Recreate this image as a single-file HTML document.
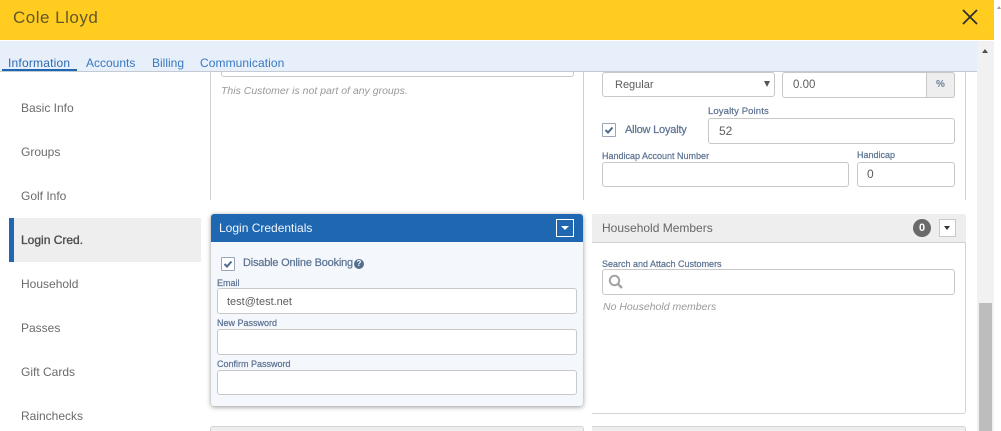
<!DOCTYPE html>
<html><head><meta charset="utf-8">
<style>
html,body{margin:0;padding:0;width:1001px;height:431px;overflow:hidden;background:#fff;font-family:"Liberation Sans",sans-serif}
div,span{position:absolute;box-sizing:border-box;white-space:nowrap}
.inp{background:#fff;border:1px solid #c8c8c8;border-radius:3px;font-size:12px;color:#5c5c5c;height:26px;line-height:25px}
.lab{font-size:9px;color:#5f7594;line-height:11px;-webkit-text-stroke:.25px #5f7594}
.nav{left:21px;font-size:12px;color:#6b6b6b;line-height:14px}
.tab{top:56px;font-size:12px;color:#3a78c0;line-height:14px}
.chk{width:14px;height:14px;background:#fff;border:1px solid #9aa5b5;border-radius:1px}
.med{font-size:11px;color:#5f7594;line-height:14px;-webkit-text-stroke:.25px #5f7594;letter-spacing:-.2px}
</style></head><body>
<div style="left:0;top:0;width:994px;height:40px;background:#ffcc1f"></div>
<div style="left:13px;top:7px;font-size:17px;letter-spacing:.5px;color:#62582c;line-height:21px">Cole Lloyd</div>
<svg style="position:absolute;left:962px;top:9px" width="16" height="16"><path d="M1 1L15 15M15 1L1 15" stroke="#2f2f2f" stroke-width="1.8" fill="none"/></svg>

<div style="left:0;top:41px;width:977px;height:30px;background:#e6effa"></div>
<div style="left:0;top:71px;width:977px;height:1px;background:#c4cad2"></div>
<div style="left:977px;top:41px;width:17px;height:390px;background:#f1f1f1"></div>
<div style="left:979px;top:303px;width:13px;height:128px;background:#bdbdbd"></div>
<div style="left:982px;top:49px;width:0;height:0;border-left:3.5px solid transparent;border-right:3.5px solid transparent;border-bottom:4px solid #505050"></div>
<div style="left:997px;top:6px;width:0;height:0;border-left:2.5px solid transparent;border-right:2.5px solid transparent;border-bottom:3px solid #a0a0a0"></div>

<div class="tab" style="left:8px;color:#2a6ab4;letter-spacing:.2px">Information</div>
<div style="left:2px;top:69px;width:75px;height:2px;background:#1f67b1"></div>
<div class="tab" style="left:86px">Accounts</div>
<div class="tab" style="left:152px">Billing</div>
<div class="tab" style="left:200px;letter-spacing:.08px">Communication</div>

<div class="nav" style="top:101px">Basic Info</div>
<div class="nav" style="top:145px">Groups</div>
<div class="nav" style="top:189px">Golf Info</div>
<div style="left:9px;top:218px;width:192px;height:44px;background:#eee;border-left:5px solid #1f67b1"></div>
<div class="nav" style="top:233px;color:#4d4d4d;-webkit-text-stroke:.35px #4d4d4d">Login Cred.</div>
<div class="nav" style="top:277px">Household</div>
<div class="nav" style="top:321px">Passes</div>
<div class="nav" style="top:365px">Gift Cards</div>
<div class="nav" style="top:409px">Rainchecks</div>

<div style="left:210px;top:72px;width:1px;height:128px;background:#cfcfcf"></div>
<div style="left:583px;top:72px;width:1px;height:128px;background:#cfcfcf"></div>
<div style="left:965px;top:72px;width:1px;height:128px;background:#cfcfcf"></div>
<div style="left:221px;top:72px;width:353px;height:5px;border:1px solid #c8c8c8;border-top:0;border-radius:0 0 3px 3px"></div>
<div style="left:221px;top:85px;font-size:10.5px;font-style:italic;color:#999;line-height:13px">This Customer is not part of any groups.</div>

<div class="inp" style="left:602px;top:72px;width:173px;height:25px;padding-left:12px;font-size:11px;line-height:24px">Regular</div>
<div style="left:764px;top:81px;width:0;height:0;border-left:3.5px solid transparent;border-right:3.5px solid transparent;border-top:6px solid #555"></div>
<div class="inp" style="left:782px;top:72px;width:173px;height:26px;padding-left:10px;font-size:11.5px">0.00</div>
<div style="left:926px;top:72px;width:29px;height:26px;background:#eee;border:1px solid #c8c8c8;border-radius:0 3px 3px 0;font-size:10px;font-weight:bold;color:#6a7f99;text-align:center;line-height:24px">%</div>

<div class="lab" style="left:708px;top:106px;font-size:9.5px;letter-spacing:.12px">Loyalty Points</div>
<div class="inp" style="left:708px;top:118px;width:247px;padding-left:10px">52</div>
<div class="chk" style="left:602px;top:123px"></div>
<svg style="position:absolute;left:603px;top:124px" width="12" height="12"><path d="M2.5 6L5 8.5L9.5 3.5" stroke="#4d6a8f" stroke-width="2" fill="none"/></svg>
<div class="med" style="left:625px;top:123px">Allow Loyalty</div>
<div class="lab" style="left:602px;top:151px">Handicap Account Number</div>
<div class="inp" style="left:602px;top:162px;width:247px;height:25px"></div>
<div class="lab" style="left:857px;top:150px">Handicap</div>
<div class="inp" style="left:857px;top:162px;width:98px;height:25px;line-height:23px;padding-left:9px">0</div>

<!-- household -->
<div style="left:592px;top:214px;width:374px;height:200px;border:1px solid #d4d4d4;border-left:0;border-top:0;border-radius:0 3px 3px 0"></div>
<div style="left:592px;top:214px;width:374px;height:29px;background:#eee;border-bottom:1px solid #cfcfcf;border-radius:0 3px 0 0"></div>
<div style="left:602px;top:221px;font-size:12px;color:#666;line-height:14px">Household Members</div>
<div style="left:913px;top:219px;width:18px;height:18px;border-radius:50%;background:#6a6a6a;color:#fff;font-size:11px;font-weight:bold;text-align:center;line-height:18px">0</div>
<div style="left:939px;top:219px;width:17px;height:18px;background:#fff;border:1px solid #c8c8c8"></div>
<div style="left:944px;top:226px;width:0;height:0;border-left:3.5px solid transparent;border-right:3.5px solid transparent;border-top:4px solid #333"></div>
<div class="lab" style="left:602px;top:259px">Search and Attach Customers</div>
<div class="inp" style="left:602px;top:269px;width:353px"></div>
<svg style="position:absolute;left:608px;top:274px" width="16" height="16"><circle cx="6.5" cy="6.5" r="4.7" stroke="#a3a3a3" stroke-width="2" fill="none"/><path d="M10 10L14 14" stroke="#a3a3a3" stroke-width="2.4"/></svg>
<div style="left:603px;top:301px;font-size:10.5px;font-style:italic;color:#999;line-height:13px">No Household members</div>

<!-- bottom panels -->
<div style="left:210px;top:426px;width:374px;height:5px;background:#eee;border:1px solid #d4d4d4;border-bottom:0;border-radius:3px 3px 0 0"></div>
<div style="left:592px;top:426px;width:374px;height:5px;background:#eee;border:1px solid #d4d4d4;border-bottom:0;border-left:0;border-radius:0 3px 0 0"></div>

<!-- login card -->
<div style="left:211px;top:214px;width:372px;height:192px;background:#f4f7fc;border-radius:3px;box-shadow:0 1px 5px rgba(60,60,60,.55)"></div>
<div style="left:211px;top:214px;width:372px;height:28px;background:#1f67b1;border-radius:3px 3px 0 0"></div>
<div style="left:219px;top:221px;font-size:12px;color:#f2f6fb;line-height:14px">Login Credentials</div>
<div style="left:556px;top:219px;width:18px;height:18px;border:1px solid #fff"></div>
<div style="left:561px;top:226px;width:0;height:0;border-left:4px solid transparent;border-right:4px solid transparent;border-top:4px solid #fff"></div>
<div class="chk" style="left:221px;top:257px"></div>
<svg style="position:absolute;left:222px;top:258px" width="12" height="12"><path d="M2.5 6L5 8.5L9.5 3.5" stroke="#4d6a8f" stroke-width="2" fill="none"/></svg>
<div class="med" style="left:243px;top:256px">Disable Online Booking</div>
<div style="left:354px;top:259px;width:10px;height:10px;border-radius:50%;background:#55708f;color:#fff;font-size:8px;font-weight:bold;text-align:center;line-height:10px">?</div>
<div class="lab" style="left:217px;top:278px">Email</div>
<div class="inp" style="left:217px;top:288px;width:360px;padding-left:9px;padding-top:1px;font-size:11px">test@test.net</div>
<div class="lab" style="left:217px;top:318px">New Password</div>
<div class="inp" style="left:217px;top:329px;width:360px"></div>
<div class="lab" style="left:217px;top:359px">Confirm Password</div>
<div class="inp" style="left:217px;top:370px;width:360px;height:25px"></div>
</body></html>
